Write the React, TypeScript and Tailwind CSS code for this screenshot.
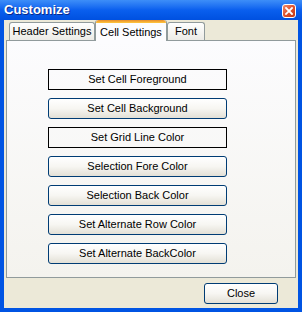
const buttons = [
  { label: 'Set Cell Foreground', flat: true },
  { label: 'Set Cell Background', flat: false },
  { label: 'Set Grid Line Color', flat: true },
  { label: 'Selection Fore Color', flat: false },
  { label: 'Selection Back Color', flat: false },
  { label: 'Set Alternate Row Color', flat: false },
  { label: 'Set Alternate BackColor', flat: false },
];

function XpButton({ label, flat }: { label: string; flat: boolean }) {
  if (flat) {
    return (
      <button
        type="button"
        className="flex h-[21px] w-[179px] items-center justify-center border border-black bg-transparent text-[11px] text-black"
      >
        {label}
      </button>
    );
  }
  return (
    <button
      type="button"
      className="flex h-[21px] w-[179px] items-center justify-center rounded-[3px] border border-[#003c74] bg-gradient-to-b from-white via-[#f7f6f2] to-[#e3e0d6] text-[11px] text-black"
    >
      {label}
    </button>
  );
}

export default function App() {
  return (
    <div
      className="flex h-[312px] w-[302px] flex-col overflow-hidden bg-[#0054e3]"
      style={{ fontFamily: '"Liberation Sans", Arial, sans-serif' }}
    >
      {/* title bar */}
      <div className="flex h-[20px] shrink-0 items-center justify-between bg-gradient-to-b from-[#3d8ef8] via-[#0a5fee] to-[#0050e0] pl-[4px] pr-[6px]">
        <span className="text-[13px] font-bold text-white [text-shadow:1px_1px_0_#0a2a8a]">Customize</span>
        <div className="mt-[1px] flex h-[14px] w-[14px] items-center justify-center rounded-[3px] border border-white bg-gradient-to-br from-[#f08a6a] via-[#e0512c] to-[#c23a14]">
          <svg width="8" height="8" viewBox="0 0 8 8">
            <path d="M1 1 L7 7 M7 1 L1 7" stroke="white" strokeWidth="1.8" strokeLinecap="square" />
          </svg>
        </div>
      </div>

      {/* client area */}
      <div className="mx-[4px] mb-[4px] flex flex-1 flex-col bg-[#ece9d8] px-[2px]">
        {/* tabs */}
        <div className="flex h-[20px] items-end pl-[3px]">
          <div className="flex h-[18px] w-[86px] items-center justify-center rounded-t-[3px] border border-b-0 border-[#919b9c] bg-gradient-to-b from-white to-[#ecebe6] text-[11px] text-black">
            Header Settings
          </div>
          <div className="relative -mb-[1px] flex h-[21px] w-[72px] flex-col rounded-t-[3px] border-x border-[#919b9c] bg-[#fcfcfe]">
            <div className="h-[3px] rounded-t-[3px] bg-gradient-to-b from-[#e68b2c] to-[#ffc73c]" />
            <div className="flex flex-1 items-center justify-center text-[11px] text-black">Cell Settings</div>
          </div>
          <div className="flex h-[18px] w-[38px] items-center justify-center rounded-t-[3px] border border-b-0 border-[#919b9c] bg-gradient-to-b from-white to-[#ecebe6] text-[11px] text-black">
            Font
          </div>
        </div>

        {/* panel */}
        <div className="flex h-[238px] flex-col gap-[8px] border border-[#919b9c] bg-gradient-to-b from-[#fcfcfe] to-[#f4f3ee] pl-[41px] pt-[28px]">
          {buttons.map((b) => (
            <XpButton key={b.label} label={b.label} flat={b.flat} />
          ))}
        </div>

        {/* footer */}
        <div className="flex flex-1 items-start justify-end pr-[18px] pt-[5px]">
          <button
            type="button"
            className="flex h-[21px] w-[74px] items-center justify-center rounded-[3px] border border-[#003c74] bg-gradient-to-b from-white via-[#f7f6f2] to-[#e3e0d6] text-[11px] text-black"
          >
            Close
          </button>
        </div>
      </div>
    </div>
  );
}
